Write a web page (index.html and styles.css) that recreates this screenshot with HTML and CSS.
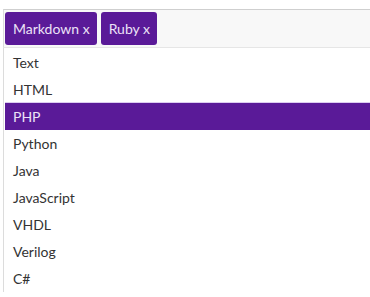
FILE: index.html
```html
<!DOCTYPE html>
<html>
<head>
<meta charset="utf-8">
<link rel="stylesheet" href="styles.css">
</head>
<body>
<div class="select">
  <div class="tags">
    <span class="tag">Markdown x</span>
    <span class="tag">Ruby x</span>
  </div>
  <ul class="list">
    <li class="item">Text</li>
    <li class="item">HTML</li>
    <li class="item active">PHP</li>
    <li class="item">Python</li>
    <li class="item">Java</li>
    <li class="item">JavaScript</li>
    <li class="item">VHDL</li>
    <li class="item">Verilog</li>
    <li class="item">C#</li>
  </ul>
</div>
</body>
</html>
```

FILE: styles.css
```css
html, body {
  margin: 0;
  padding: 0;
  background: #ffffff;
}
body {
  font-family: Lato, "Open Sans", "Liberation Sans", sans-serif;
  font-size: 14px;
  color: #333333;
}
.select {
  padding: 9px 0 0 3px;
}
.tags {
  display: flex;
  gap: 4px;
  padding: 2px 2px 2px 1px;
  background: #f8f8f8;
  border-top: 1px solid #cfcfcf;
  border-left: 1px solid #dcdcdc;
  border-bottom: 1px solid #e6e6e6;
}
.tag {
  display: block;
  height: 33px;
  line-height: 33px;
  padding: 0 7px 0 8px;
  background: #5a1a98;
  color: #ece2f7;
  border-radius: 3px;
}
.list {
  list-style: none;
  margin: 0;
  padding: 1px 0 0 1px;
  border-left: 1px solid #dcdcdc;
}
.item {
  height: 27px;
  line-height: 27px;
  padding-left: 8px;
}
.active {
  background: #5a1a98;
  color: #ece2f7;
  box-shadow: 0 -1px 0 #dccdf0;
}
```
